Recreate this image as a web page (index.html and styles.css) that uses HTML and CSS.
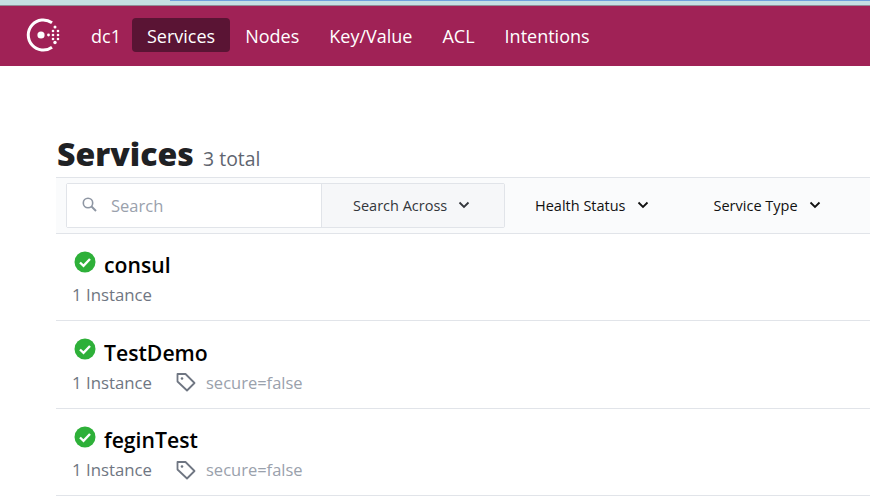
FILE: index.html
```html
<!DOCTYPE html>
<html lang="en">
<head>
<meta charset="utf-8">
<title>Services - Consul</title>
<link rel="stylesheet" href="styles.css">
</head>
<body>
<div class="chrome"><div class="chrome-tab"></div></div>
<nav class="nav">
  <svg class="logo" width="38" height="36" viewBox="0 0 38 36">
    <path d="M28 5.800A15 15 0 1 0 28 30.200" fill="none" stroke="#fff" stroke-width="3"/>
    <circle cx="17" cy="18" r="3.600" fill="#fff"/>
    <g fill="#fff">
      <circle cx="24.500" cy="18" r="1.400"/>
      <circle cx="29" cy="14" r="1.300"/><circle cx="29" cy="18" r="1.300"/><circle cx="29" cy="22" r="1.300"/>
      <circle cx="34" cy="14" r="1.300"/><circle cx="34" cy="18" r="1.300"/><circle cx="34" cy="22" r="1.300"/>
      <circle cx="31" cy="10" r="1.500"/><circle cx="31" cy="25.500" r="1.700"/>
    </g>
  </svg>
  <a class="dc">dc1</a>
  <a class="nav-item active">Services</a>
  <a class="nav-item">Nodes</a>
  <a class="nav-item">Key/Value</a>
  <a class="nav-item">ACL</a>
  <a class="nav-item">Intentions</a>
</nav>
<main class="main">
  <h1 class="title">Services <small class="total">3 total</small></h1>
  <div class="toolbar">
    <div class="search-group">
      <label class="search">
        <svg class="search-icon" width="18" height="18" viewBox="0 0 18 18"><circle cx="7" cy="7" r="4.700" fill="none" stroke="#8e96a3" stroke-width="1.600"/><path d="M10.500 10.500L15 15" stroke="#8e96a3" stroke-width="2"/></svg>
        <span class="placeholder">Search</span>
      </label>
      <div class="across">Search Across <svg class="chev" width="12" height="8" viewBox="0 0 12 8"><path d="M1.500 1.500L6 6l4.500-4.500" fill="none" stroke="currentColor" stroke-width="1.800"/></svg></div>
    </div>
    <div class="filter health">Health Status <svg class="chev" width="12" height="8" viewBox="0 0 12 8"><path d="M1.500 1.500L6 6l4.500-4.500" fill="none" stroke="currentColor" stroke-width="1.800"/></svg></div>
    <div class="filter type">Service Type <svg class="chev" width="12" height="8" viewBox="0 0 12 8"><path d="M1.500 1.500L6 6l4.500-4.500" fill="none" stroke="currentColor" stroke-width="1.800"/></svg></div>
  </div>
  <ul class="list">
    <li class="row">
      <div class="name-line">
        <svg class="check" width="22" height="22" viewBox="0 0 22 22"><circle cx="11" cy="11" r="10.500" fill="#2eb039"/><path d="M6 11.500l3.500 3.300L16 8" fill="none" stroke="#fff" stroke-width="2.400"/></svg>
        <span class="name">consul</span>
      </div>
      <div class="meta"><span>1 Instance</span></div>
    </li>
    <li class="row">
      <div class="name-line">
        <svg class="check" width="22" height="22" viewBox="0 0 22 22"><circle cx="11" cy="11" r="10.500" fill="#2eb039"/><path d="M6 11.500l3.500 3.300L16 8" fill="none" stroke="#fff" stroke-width="2.400"/></svg>
        <span class="name">TestDemo</span>
      </div>
      <div class="meta"><span>1 Instance</span>
        <svg class="tag" width="22" height="22" viewBox="0 0 22 22"><path d="M2.500 3h8l9 9-7.500 7.500-9.500-9z" fill="none" stroke="#6f7682" stroke-width="1.800" stroke-linejoin="round"/><circle cx="7" cy="7.500" r="1.300" fill="#6f7682"/></svg>
        <span class="tag-text">secure=false</span></div>
    </li>
    <li class="row">
      <div class="name-line">
        <svg class="check" width="22" height="22" viewBox="0 0 22 22"><circle cx="11" cy="11" r="10.500" fill="#2eb039"/><path d="M6 11.500l3.500 3.300L16 8" fill="none" stroke="#fff" stroke-width="2.400"/></svg>
        <span class="name">feginTest</span>
      </div>
      <div class="meta"><span>1 Instance</span>
        <svg class="tag" width="22" height="22" viewBox="0 0 22 22"><path d="M2.500 3h8l9 9-7.500 7.500-9.500-9z" fill="none" stroke="#6f7682" stroke-width="1.800" stroke-linejoin="round"/><circle cx="7" cy="7.500" r="1.300" fill="#6f7682"/></svg>
        <span class="tag-text">secure=false</span></div>
    </li>
  </ul>
</main>
</body>
</html>
```
FILE: styles.css
```css
* { box-sizing: border-box; }
html, body { margin: 0; padding: 0; background: #fff; overflow: hidden; }
body { width: 870px; height: 498px; font-family: "Open Sans", "Noto Sans", sans-serif; color: #1f2124; }
.chrome { height: 6px; background: #c5dfe3; padding-left: 170px; border-bottom: 1px solid #8f8f98; }
.chrome-tab { height: 1px; background: #6fa0dc; }
.nav { height: 60px; background: #a02256; display: flex; align-items: center; padding: 0 0 2px 24px; color: #fff; font-size: 18px; }
.logo { flex: none; }
.dc { margin-left: 29px; width: 41px; padding-top: 2px; }
.nav-item { height: 34px; line-height: 37px; padding: 0 15px; border-radius: 4px; }
.active { background: #5a1434; }
.main { padding-left: 56px; }
.title { margin: 0; height: 111px; padding: 64px 0 0 1px; font-size: 32px; line-height: 47px; font-weight: 800; color: #1f2124; }
.total { font-size: 19.400px; font-weight: 400; color: #5f6570; margin-left: 1px; }
.toolbar { height: 56.500px; display: flex; align-items: center; background: #fafbfc; border-top: 1px solid #e1e4e9; border-bottom: 1px solid #e1e4e9; padding-left: 10px; font-size: 14.500px; }
.search-group { display: flex; width: 439px; height: 45px; border: 1px solid #e1e4e9; border-radius: 2px; }
.search { width: 255px; background: #fff; display: flex; align-items: center; padding-left: 14px; border-right: 1px solid #e1e4e9; }
.placeholder { margin-left: 12px; font-size: 16.500px; color: #9aa1ac; }
.across { flex: 1; background: #f6f7f9; display: flex; align-items: center; padding-left: 31px; color: #33363b; gap: 11px; line-height: 43px; }
.filter { display: flex; align-items: center; gap: 11px; color: #111; line-height: 53px; }
.health { margin-left: 30px; }
.type { margin-left: 65px; }
.list { list-style: none; margin: 0; padding: 0; }
.row { height: 87.500px; border-bottom: 1px solid #e1e4e9; padding: 15.500px 0 0 18px; }
.name-line { display: flex; align-items: center; height: 30px; }
.check { flex: none; margin-top: -5px; }
.name { margin-left: 8px; margin-top: 1px; font-size: 21.200px; font-weight: 600; color: #000; }
.meta { display: flex; align-items: center; margin-top: 3.500px; margin-left: -2px; font-size: 16.800px; color: #6f7682; height: 24px; }
.tag { margin-left: 23px; }
.tag-text { margin-left: 9px; font-size: 16.500px; color: #9aa1ac; }
```
